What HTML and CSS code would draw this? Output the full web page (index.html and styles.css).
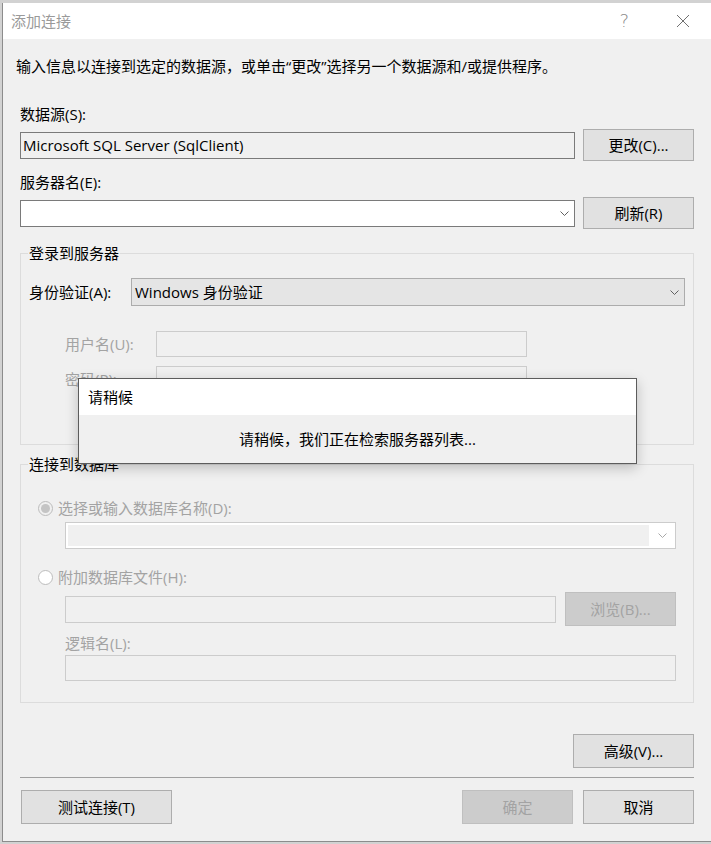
FILE: index.html
```html
<!DOCTYPE html>
<html lang="zh-CN">
<head>
    <meta charset="UTF-8">
    <title>添加连接</title>
    <link rel="stylesheet" href="styles.css">
</head>
<body>

    <div class="window">
        <div class="titlebar">
            <span class="title">添加连接</span>
            <span class="help">?</span>
            <svg class="close" width="14" height="14" viewBox="0 0 14 14">
                <path d="M1 1 L13 13 M13 1 L1 13" stroke="#707070" stroke-width="1" fill="none"/>
            </svg>
        </div>

        <div class="content">
            <p class="intro">输入信息以连接到选定的数据源，或单击“更改”选择另一个数据源和/或提供程序。</p>

            <div class="label first">数据源(S):</div>
            <div class="row">
                <div class="box readonly">Microsoft SQL Server (SqlClient)</div>
                <div class="btn">更改(C)...</div>
            </div>

            <div class="label second">服务器名(E):</div>
            <div class="row">
                <div class="box combo">
                    <span></span>
                    <svg class="chevron" width="9" height="5" viewBox="0 0 9 5"><path d="M0.5 0.5 L4.5 4.5 L8.5 0.5" stroke="#606060" fill="none"/></svg>
                </div>
                <div class="btn">刷新(R)</div>
            </div>

            <fieldset class="group login">
                <legend>登录到服务器</legend>
                <div class="auth-row">
                    <span class="auth-label">身份验证(A):</span>
                    <div class="box dropdown">
                        <span>Windows 身份验证</span>
                        <svg class="chevron" width="9" height="5" viewBox="0 0 9 5"><path d="M0.5 0.5 L4.5 4.5 L8.5 0.5" stroke="#606060" fill="none"/></svg>
                    </div>
                </div>
                <div class="cred-row user">
                    <span class="cred-label">用户名(U):</span>
                    <div class="box disabled"></div>
                </div>
                <div class="cred-row pwd">
                    <span class="cred-label">密码(P):</span>
                    <div class="box disabled"></div>
                </div>
            </fieldset>

            <fieldset class="group database">
                <legend>连接到数据库</legend>
                <div class="radio-row">
                    <span class="radio checked"></span>
                    <span class="muted">选择或输入数据库名称(D):</span>
                </div>
                <div class="box disabled-combo indent">
                    <span class="fill"></span>
                    <svg class="chevron" width="9" height="5" viewBox="0 0 9 5"><path d="M0.5 0.5 L4.5 4.5 L8.5 0.5" stroke="#a8a8a8" fill="none"/></svg>
                </div>
                <div class="radio-row second">
                    <span class="radio"></span>
                    <span class="muted">附加数据库文件(H):</span>
                </div>
                <div class="file-row indent">
                    <div class="box disabled"></div>
                    <div class="btn off">浏览(B)...</div>
                </div>
                <div class="muted indent logic-label">逻辑名(L):</div>
                <div class="box disabled indent logic-box"></div>
            </fieldset>

            <div class="advanced-row">
                <div class="btn wide">高级(V)...</div>
            </div>

            <div class="separator"></div>

            <div class="footer">
                <div class="btn test">测试连接(T)</div>
                <div class="spacer"></div>
                <div class="btn off">确定</div>
                <div class="btn">取消</div>
            </div>
        </div>

        <div class="wait">
            <div class="wait-title">请稍候</div>
            <div class="wait-body">请稍候，我们正在检索服务器列表...</div>
        </div>
    </div>

</body>
</html>
```

FILE: styles.css
```css
body {
    margin: 0;
    background-color: #d2d2d2;
    font-family: "Open Sans", "Noto Sans CJK SC", sans-serif;
    font-size: 15px;
    line-height: 20px;
    color: #000;
    overflow: hidden;
}
.window {
    position: relative;
    margin: 3px 0 0 2px;
    height: 838px;
    background-color: #f0f0f0;
    border-left: 1px solid #8c8c8c;
    border-bottom: 1px solid #8c8c8c;
}
.titlebar {
    display: flex;
    align-items: center;
    height: 36px;
    background-color: #fff;
    padding-left: 8px;
}
.title {
    color: #9a9a9a;
    flex: 1;
}
.help {
    color: #8a8a8a;
    font-size: 18px;
    font-family: "DejaVu Sans", sans-serif;
    font-weight: 200;
    margin-right: 47px;
}
.close {
    margin-right: 21px;
}
.content {
    padding: 0 17px 0 17px;
}
.intro {
    margin: 17px 0 0 -4px;
}
.label.first {
    margin-top: 28px;
}
.label.second {
    margin-top: 11px;
}
.row {
    display: flex;
    align-items: center;
    gap: 8px;
    margin-top: 5px;
}
.row .box {
    flex: 1;
}
.box {
    box-sizing: border-box;
    height: 27px;
    border: 1px solid #7a7a7a;
    display: flex;
    align-items: center;
    padding-left: 2px;
}
.box.readonly {
    background-color: #f0f0f0;
}
.box.combo {
    background-color: #fff;
}
.box span {
    flex: 1;
}
.chevron {
    margin-right: 5px;
}
.btn {
    box-sizing: border-box;
    height: 32px;
    width: 111px;
    background-color: #e1e1e1;
    border: 1px solid #adadad;
    display: flex;
    align-items: center;
    justify-content: center;
}
.btn.off {
    background-color: #cccccc;
    border-color: #bfbfbf;
    color: #a3a3a3;
}
.group {
    margin: 14px 0 0 0;
    padding: 15px 8px 0 8px;
    border: 1px solid #dcdcdc;
    min-width: 0;
}
.group legend {
    padding: 0 1px;
    margin-left: -1px;
}
.login {
    padding-bottom: 52px;
}
.auth-row {
    display: flex;
    align-items: center;
    height: 28px;
}
.auth-label {
    width: 102px;
}
.box.dropdown {
    flex: 1;
    height: 28px;
    background-color: #e5e5e5;
    border-color: #acacac;
    padding-left: 3px;
}
.cred-row {
    display: flex;
    align-items: center;
    padding-left: 36px;
    color: #a3a3a3;
}
.cred-row.user {
    margin-top: 25px;
}
.cred-row.pwd {
    margin-top: 9px;
}
.cred-label {
    width: 91px;
}
.box.disabled {
    width: 371px;
    height: 26px;
    border-color: #cccccc;
    background-color: #f0f0f0;
}
.database {
    margin-top: 9px;
    padding: 24px 17px 21px 8px;
}
.radio-row {
    display: flex;
    align-items: center;
    gap: 5px;
    padding-left: 9px;
    height: 20px;
}
.radio-row.second {
    margin-top: 18px;
}
.radio {
    box-sizing: border-box;
    width: 15px;
    height: 15px;
    border-radius: 50%;
    border: 1px solid #bcbcbc;
    background-color: #fff;
    display: flex;
    align-items: center;
    justify-content: center;
}
.radio.checked {
    background-color: #f0f0f0;
}
.radio.checked::after {
    content: "";
    width: 9px;
    height: 9px;
    border-radius: 50%;
    background-color: #c4c4c4;
}
.muted {
    color: #a3a3a3;
}
.indent {
    margin-left: 36px;
}
.box.disabled-combo {
    margin-top: 4px;
    border-color: #cccccc;
    background-color: #fff;
    padding: 2px 0 2px 2px;
    align-items: stretch;
}
.disabled-combo .fill {
    background-color: #f0f0f0;
    margin-right: 2px;
}
.disabled-combo .chevron {
    align-self: center;
    margin: 0 8px 0 7px;
}
.file-row {
    display: flex;
    align-items: center;
    gap: 9px;
    margin-top: 5px;
}
.file-row .box {
    flex: 1;
    width: auto;
    height: 27px;
}
.file-row .btn {
    height: 34px;
}
.logic-label {
    margin-top: 7px;
}
.box.logic-box {
    width: auto;
    margin-top: 2px;
}
.advanced-row {
    display: flex;
    justify-content: flex-end;
    margin-top: 31px;
}
.btn.wide {
    width: 121px;
    height: 34px;
}
.separator {
    margin-top: 9px;
    height: 1px;
    background-color: #a0a0a0;
}
.footer {
    display: flex;
    gap: 10px;
    margin-top: 12px;
}
.footer .btn {
    height: 34px;
}
.btn.test {
    width: 151px;
    margin-left: 1px;
}
.spacer {
    flex: 1;
}
.wait {
    position: absolute;
    left: 75px;
    top: 375px;
    width: 559px;
    height: 86px;
    box-sizing: border-box;
    border: 1px solid #5c5c5c;
    background-color: #f0f0f0;
    box-shadow: 0 4px 12px rgba(0, 0, 0, 0.22);
}
.wait-title {
    height: 36px;
    background-color: #fff;
    display: flex;
    align-items: center;
    padding-left: 9px;
}
.wait-body {
    text-align: center;
    margin-top: 14px;
}
```
